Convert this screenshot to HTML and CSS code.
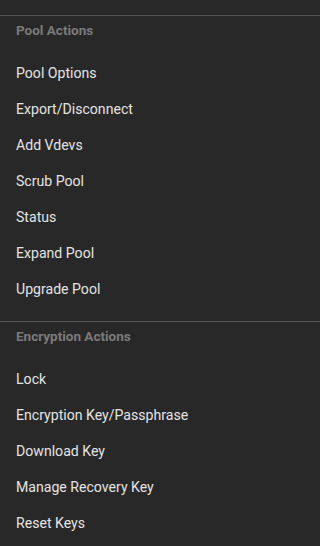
FILE: index.html
```html
<!DOCTYPE html>
<html>
<head>
<meta charset="utf-8">
<link rel="stylesheet" href="styles.css">
</head>
<body>
<div class="menu">
  <div class="group">
    <div class="divider"></div>
    <div class="header">Pool Actions</div>
    <div class="items">
      <div class="item">Pool Options</div>
      <div class="item">Export/Disconnect</div>
      <div class="item">Add Vdevs</div>
      <div class="item">Scrub Pool</div>
      <div class="item">Status</div>
      <div class="item">Expand Pool</div>
      <div class="item">Upgrade Pool</div>
    </div>
  </div>
  <div class="group">
    <div class="divider"></div>
    <div class="header">Encryption Actions</div>
    <div class="items">
      <div class="item">Lock</div>
      <div class="item">Encryption Key/Passphrase</div>
      <div class="item">Download Key</div>
      <div class="item">Manage Recovery Key</div>
      <div class="item">Reset Keys</div>
    </div>
  </div>
</div>
</body>
</html>
```

FILE: styles.css
```css
html, body {
  margin: 0;
  padding: 0;
  background: #282828;
  height: 100%;
  overflow: hidden;
}
.menu {
  padding-top: 15px;
  font-family: Roboto, "Liberation Sans", sans-serif;
}
.divider {
  height: 1px;
  background: #555555;
}
.header {
  height: 28px;
  line-height: 28px;
  padding-left: 16px;
  font-size: 13.5px;
  font-weight: 700;
  color: #7b7b7b;
}
.items {
  padding-top: 11px;
  padding-bottom: 14px;
}
.item {
  height: 36px;
  line-height: 36px;
  padding-left: 16px;
  font-size: 14.1px;
  color: #e3e3e3;
  white-space: nowrap;
}
```
